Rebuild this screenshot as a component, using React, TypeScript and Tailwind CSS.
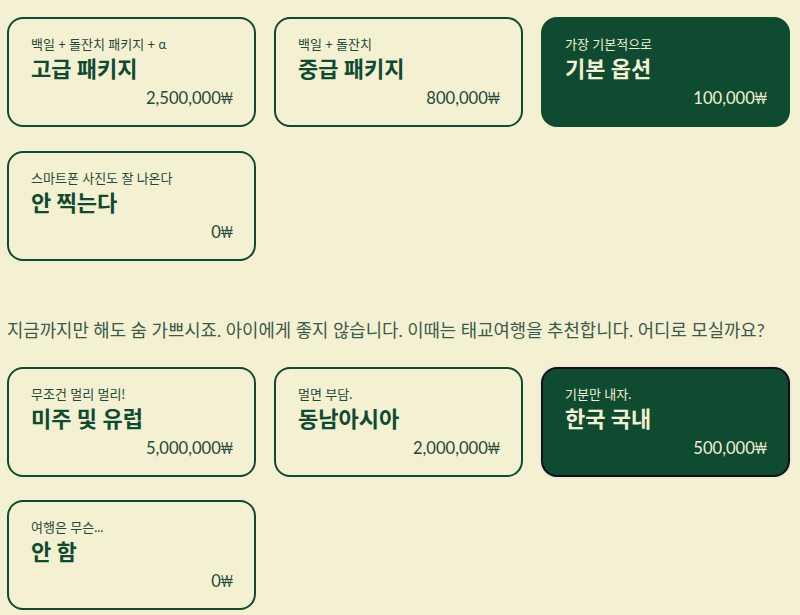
import React from "react";

type Item = { sub: string; title: string; price: string; selected?: boolean; ring?: boolean };

const FONT = { fontFamily: 'Lato, "Noto Sans CJK KR", sans-serif' };

function Card({ item }: { item: Item }) {
  const sel = item.selected;
  return (
    <div
      className={
        "w-[249px] h-[110px] rounded-[16px] border-2 pl-[22px] pr-[21px] pt-[16px] flex flex-col " +
        (sel
          ? item.ring
            ? "bg-[#0e4b30] border-[#111] shadow-[0_0_0_1.5px_#e8e8e0] text-[#f4f0d2]"
            : "bg-[#0e4b30] border-[#0e4b30] text-[#f4f0d2]"
          : "bg-[#f4f0d2] border-[#0e4b30] text-[#0e4b30]")
      }
    >
      <div className={"text-[13px] leading-[18px] " + (sel ? "text-[#f4f0d2]" : "text-[#1f4a36]")}>{item.sub}</div>
      <div className="text-[22px] leading-[28px] font-bold mt-[2px]">{item.title}</div>
      <div className={"text-[16.6px] leading-[24px] text-right mt-[3px] " + (sel ? "text-[#f4f0d2]" : "text-[#24493a]")}>
        {item.price}
        <span className="text-[16px]" style={{ fontFamily: 'Roboto, "Open Sans", sans-serif', fontWeight: 300 }}>₩</span>
      </div>
    </div>
  );
}

export default function App() {
  const a: Item[] = [
    { sub: "백일 + 돌잔치 패키지 + α", title: "고급 패키지", price: "2,500,000" },
    { sub: "백일 + 돌잔치", title: "중급 패키지", price: "800,000" },
    { sub: "가장 기본적으로", title: "기본 옵션", price: "100,000", selected: true },
    { sub: "스마트폰 사진도 잘 나온다", title: "안 찍는다", price: "0" },
  ];
  const b: Item[] = [
    { sub: "무조건 멀리 멀리!", title: "미주 및 유럽", price: "5,000,000" },
    { sub: "멀면 부담.", title: "동남아시아", price: "2,000,000" },
    { sub: "기분만 내자.", title: "한국 국내", price: "500,000", selected: true, ring: true },
    { sub: "여행은 무슨...", title: "안 함", price: "0" },
  ];
  return (
    <div className="min-h-[615px] w-[800px] bg-[#f4f0d2] pl-[7px] pt-[17px]" style={FONT}>
      <div className="grid grid-cols-[249px_249px_249px] gap-x-[18px] gap-y-[24px]">
        {a.map((it, i) => (
          <Card key={i} item={it} />
        ))}
      </div>
      <p className="mt-[56px] mb-[24px] text-[17.8px] leading-[26px] text-[#3a5a4c] whitespace-nowrap">
        지금까지만 해도 숨 가쁘시죠. 아이에게 좋지 않습니다. 이때는 태교여행을 추천합니다. 어디로 모실까요?
      </p>
      <div className="grid grid-cols-[249px_249px_249px] gap-x-[18px] gap-y-[23px]">
        {b.map((it, i) => (
          <Card key={i} item={it} />
        ))}
      </div>
    </div>
  );
}
